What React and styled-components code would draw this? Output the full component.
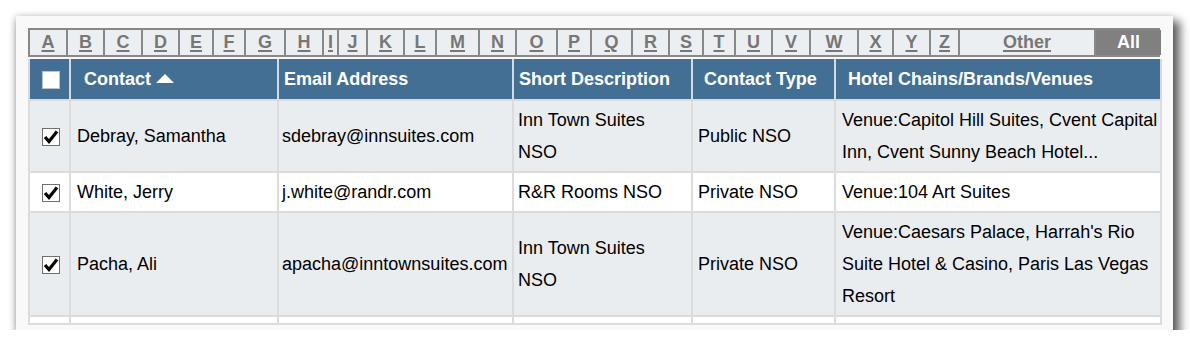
import styled, { createGlobalStyle } from "styled-components";

const GlobalStyle = createGlobalStyle`
  body {
    margin: 0;
    background: #ffffff;
    font-family: "Liberation Sans", Arial, sans-serif;
  }
`;

// 바깥 패널 (그림자 있는 창)
const Panel = styled.div`
  margin: 16px 0 0 16px;
  width: 1157px;
  height: 314px;
  box-sizing: border-box;
  padding: 12px 13px 0 12px;
  background: #f9f9f9;
  box-shadow: 5px 7px 9px 2px rgba(0, 0, 0, 0.62), -1px 0 6px rgba(0, 0, 0, 0.15);
  overflow: hidden;
`;

// 알파벳 필터 바
const LetterBar = styled.div`
  display: flex;
  height: 29px;
  box-sizing: border-box;
  border-top: 2px solid #888888;
  border-bottom: 2px solid #888888;
  margin-bottom: 2px;
`;

const LetterCell = styled.div`
  width: ${props => props.width}px;
  flex: none;
  box-sizing: border-box;
  border-left: 2px solid #888888;
  background: ${props => (props.active ? "#808080" : "#eceff2")};
  display: flex;
  align-items: center;
  justify-content: center;
  font-size: 18px;
  font-weight: bold;
  line-height: 25px;
`;

const LetterLink = styled.span`
  color: #777777;
  text-decoration: underline;
  text-decoration-thickness: 2px;
  text-underline-offset: 2px;
`;

const AllLabel = styled.span`
  color: #ffffff;
`;

// 테이블
const Table = styled.table`
  width: 1132px;
  border-collapse: collapse;
  table-layout: fixed;
`;

const HeadCell = styled.th`
  height: 41px;
  box-sizing: border-box;
  padding: 1px 0 0 ${props => props.pad || 5}px;
  background: #436f94;
  color: #ffffff;
  font-size: 18px;
  font-weight: bold;
  text-align: left;
  white-space: nowrap;
  border-left: 2px solid #d3dae1;
  border-right: 2px solid #d3dae1;
`;

const Row = styled.tr`
  background: ${props => (props.alt ? "#eaedf0" : "#ffffff")};
`;

const Cell = styled.td`
  padding: 3px 0 3px ${props => props.pad || 5}px;
  border: 2px solid #dcdcdc;
  font-size: 18px;
  line-height: 32px;
  color: #000000;
  white-space: nowrap;
  vertical-align: middle;
`;

const CheckCell = styled(Cell)`
  padding: 0 0 0 3px;
  text-align: center;
`;

const HeadCheckCell = styled(HeadCell)`
  padding: 0 0 0 3px;
  text-align: center;
`;

const CheckBox = styled.span`
  display: inline-flex;
  vertical-align: middle;
  width: 18px;
  height: 18px;
  box-sizing: border-box;
  background: #ffffff;
  border: 1px solid ${props => (props.head ? "#b9c3cc" : "#707070")};
  align-items: center;
  justify-content: center;
`;

const SortArrow = styled.svg`
  margin-left: 5px;
  vertical-align: 2px;
`;

const letters = [
  ["A", 38], ["B", 37], ["C", 38], ["D", 37], ["E", 34], ["F", 32], ["G", 40],
  ["H", 38], ["I", 15], ["J", 29], ["K", 37], ["L", 32], ["M", 43], ["N", 37],
  ["O", 41], ["P", 34], ["Q", 41], ["R", 37], ["S", 34], ["T", 32], ["U", 37],
  ["V", 38], ["W", 48], ["X", 35], ["Y", 37], ["Z", 29], ["Other", 136],
];

const columns = [
  { title: "Contact", width: 208, headPad: 13, pad: 6, sort: true },
  { title: "Email Address", width: 235, headPad: 5, pad: 3 },
  { title: "Short Description", width: 179, headPad: 5, pad: 4 },
  { title: "Contact Type", width: 143, headPad: 11, pad: 5 },
  { title: "Hotel Chains/Brands/Venues", width: 326, headPad: 12, pad: 6 },
];

const rows = [
  {
    checked: true,
    cells: [
      ["Debray, Samantha"],
      ["sdebray@innsuites.com"],
      ["Inn Town Suites", "NSO"],
      ["Public NSO"],
      ["Venue:Capitol Hill Suites, Cvent Capital", "Inn, Cvent Sunny Beach Hotel..."],
    ],
  },
  {
    checked: true,
    cells: [
      ["White, Jerry"],
      ["j.white@randr.com"],
      ["R&R Rooms NSO"],
      ["Private NSO"],
      ["Venue:104 Art Suites"],
    ],
  },
  {
    checked: true,
    cells: [
      ["Pacha, Ali"],
      ["apacha@inntownsuites.com"],
      ["Inn Town Suites", "NSO"],
      ["Private NSO"],
      ["Venue:Caesars Palace, Harrah's Rio", "Suite Hotel & Casino, Paris Las Vegas", "Resort"],
    ],
  },
  { checked: false, cells: [[""], [""], [""], [""], [""]] },
];

function Check({ checked, head }) {
  return (
    <CheckBox head={head}>
      {checked && (
        <svg width="16" height="16" viewBox="0 0 16 16">
          <path d="M2 8 L6 12.5 L14 2.5" fill="none" stroke="#000" strokeWidth="3.2" />
        </svg>
      )}
    </CheckBox>
  );
}

function Lines({ lines }) {
  return lines.map((line, i) => (
    <span key={i}>
      {i > 0 && <br />}
      {line}
    </span>
  ));
}

export default function App() {
  return (
    <>
      <GlobalStyle />
      <Panel>
        <LetterBar>
          {letters.map(([label, width]) => (
            <LetterCell key={label} width={width}>
              <LetterLink>{label}</LetterLink>
            </LetterCell>
          ))}
          <LetterCell width={67} active>
            <AllLabel>All</AllLabel>
          </LetterCell>
        </LetterBar>

        <Table>
          <colgroup>
            <col style={{ width: 41 }} />
            {columns.map(c => (
              <col key={c.title} style={{ width: c.width }} />
            ))}
          </colgroup>
          <thead>
            <tr>
              <HeadCheckCell>
                <Check head />
              </HeadCheckCell>
              {columns.map(c => (
                <HeadCell key={c.title} pad={c.headPad}>
                  {c.title}
                  {c.sort && (
                    <SortArrow width="18" height="9" viewBox="0 0 18 9">
                      <polygon points="0,9 9,0 18,9" fill="#ffffff" />
                    </SortArrow>
                  )}
                </HeadCell>
              ))}
            </tr>
          </thead>
          <tbody>
            {rows.map((row, r) => (
              <Row key={r} alt={r % 2 === 0}>
                <CheckCell>{row.checked && <Check checked />}</CheckCell>
                {row.cells.map((lines, c) => (
                  <Cell key={c} pad={columns[c].pad}>
                    <Lines lines={lines} />
                  </Cell>
                ))}
              </Row>
            ))}
          </tbody>
        </Table>
      </Panel>
    </>
  );
}
